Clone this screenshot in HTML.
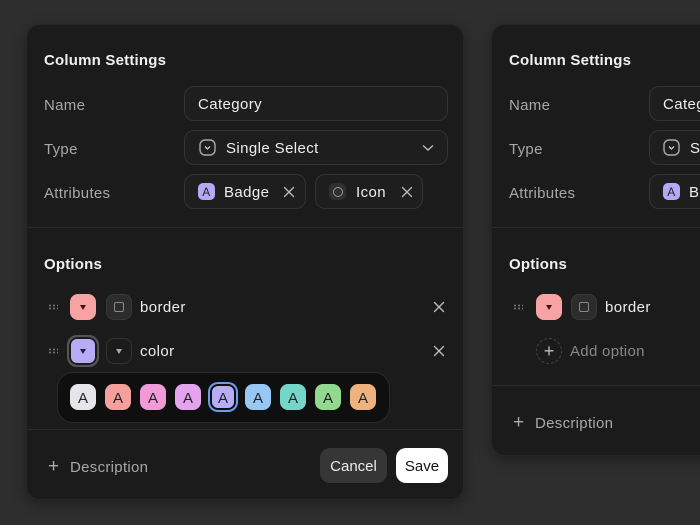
<!DOCTYPE html><html><head><style>
*{box-sizing:border-box;margin:0;padding:0}
body{width:700px;height:525px;background:#2e2e2e;position:relative;overflow:hidden;font-family:"Liberation Sans",sans-serif;color:#ececec}
.card{position:absolute;background:#1b1b1b;border-radius:14px;border:1px solid #262626;box-shadow:0 4px 14px rgba(0,0,0,.35)}
.a{position:absolute;white-space:nowrap}
.t{font-size:15px;font-weight:bold;color:#f0f0f0;letter-spacing:0.2px}
.l{font-size:15px;color:#a8a8a8;letter-spacing:0.3px}
.f{position:absolute;height:35px;border:1px solid #333;border-radius:10px;background:#1e1e1e;font-size:15px;color:#eee;display:flex;align-items:center;padding-left:13px;letter-spacing:0.4px;padding-top:2px}
.hr{position:absolute;height:1px;background:#2a2a2a}
.sw{position:absolute;width:26px;height:26px;border-radius:8px;display:flex;align-items:center;justify-content:center}
.tri{width:0;height:0;border-left:3.5px solid transparent;border-right:3.5px solid transparent;border-top:5px solid #4a1010}
.x{position:absolute;width:12px;height:12px}
.dots{position:absolute;width:10px;height:6px;background-image:radial-gradient(circle,#777 0.8px,transparent 1.1px);background-size:4px 3px}
.c{position:absolute;top:384px;width:26px;height:26px;border-radius:8px;font-size:15px;color:#222;display:flex;align-items:center;justify-content:center;padding-top:2px}
.opt{font-size:15px;letter-spacing:0.4px}
</style></head><body>
<svg width="0" height="0" style="position:absolute"><defs><symbol id="x" viewBox="0 0 12 12"><path d="M1.5 1.5L10.5 10.5M10.5 1.5L1.5 10.5" stroke="#bbb" stroke-width="1.4" fill="none" stroke-linecap="round"/></symbol></defs></svg>
<div class="card" style="left:26px;top:24px;width:438px;height:476px">
<div class="a t" style="left:17px;top:27px">Column Settings</div>
<div class="a l" style="left:17px;top:72px">Name</div>
<div class="a l" style="left:17px;top:116px">Type</div>
<div class="a l" style="left:17px;top:160px">Attributes</div>
<div class="f" style="left:157px;top:61px;width:264px">Category</div>
<div class="f" style="left:157px;top:105px;width:264px;padding-left:14px"><svg width="17" height="17" viewBox="0 0 17 17" style="margin-right:10px;margin-top:-2px"><rect x="1" y="1" width="15" height="15" rx="5" fill="none" stroke="#aaa" stroke-width="1.4"/><path d="M6 7.5L8.5 10L11 7.5" fill="none" stroke="#ccc" stroke-width="1.3"/></svg>Single Select<svg width="12" height="8" viewBox="0 0 12 8" style="position:absolute;right:13px;top:13px"><path d="M1 1.5L6 6L11 1.5" fill="none" stroke="#bbb" stroke-width="1.4"/></svg></div>
<div class="f" style="left:157px;top:149px;width:122px;padding-left:13px"><span style="width:17px;height:17px;background:#b7a8f5;border-radius:5px;display:inline-block;margin-right:9px;margin-top:-2px;font-size:12px;color:#222;text-align:center;line-height:18px">A</span>Badge<svg class="" width="12" height="12" style="margin-left:14px;margin-top:-2px"><use href="#x"/></svg></div>
<div class="f" style="left:288px;top:149px;width:108px;padding-left:13px"><span style="width:17px;height:17px;background:#2f2f2f;border-radius:5px;display:inline-flex;align-items:center;justify-content:center;margin-right:10px;margin-top:-2px"><span style="width:10px;height:10px;border:1.5px solid #999;border-radius:50%"></span></span>Icon<svg width="12" height="12" style="margin-left:15px;margin-top:-2px"><use href="#x"/></svg></div>
<div class="hr" style="left:0;top:202px;width:436px"></div>
<div class="a t" style="left:17px;top:231px">Options</div>
<div class="dots" style="left:21px;top:279px"></div>
<div class="sw" style="left:43px;top:269px;background:#f7a3a3"><div class="tri"></div></div>
<div class="sw" style="left:79px;top:269px;background:#2c2c2c;border:1px solid #383838"><span style="width:10px;height:10px;border:1.5px solid #888;border-radius:2px"></span></div>
<div class="a opt" style="left:113px;top:274px">border</div>
<svg class="x" style="left:406px;top:276px"><use href="#x"/></svg>
<div class="dots" style="left:21px;top:323px"></div>
<div class="sw" style="left:40px;top:310px;width:32px;height:32px;border-radius:10px;border:2px solid #555;background:#b9acf7;box-shadow:inset 0 0 0 2px #1b1b1b"><div class="tri" style="border-top-color:#221a55"></div></div>
<div class="sw" style="left:79px;top:313px;background:#1b1b1b;border:1px solid #333"><div class="tri" style="border-top-color:#aaa"></div></div>
<div class="a opt" style="left:113px;top:318px">color</div>
<svg class="x" style="left:406px;top:320px"><use href="#x"/></svg>
<div class="hr" style="left:0;top:404px;width:436px"></div>
<div class="a" style="left:21px;top:431px;font-size:19px;color:#aaa">+</div>
<div class="a l" style="left:43px;top:434px">Description</div>
<div class="a" style="left:293px;top:423px;width:67px;height:35px;background:#363636;border-radius:10px;font-size:15px;text-align:center;line-height:37px">Cancel</div>
<div class="a" style="left:369px;top:423px;width:52px;height:35px;background:#fff;color:#111;border-radius:10px;font-size:15px;text-align:center;line-height:37px">Save</div>
</div>
<div class="a" style="left:57px;top:372px;width:333px;height:51px;background:#0f0f0f;border:1px solid #2a2a2a;border-radius:16px"></div>
<div class="c" style="left:70px;background:#e6e6ea">A</div>
<div class="c" style="left:105px;background:#f5a09c">A</div>
<div class="c" style="left:140px;background:#f09bd8">A</div>
<div class="c" style="left:175px;background:#e3a3ef">A</div>
<div class="c" style="left:210px;background:#b9acf7;border:2px solid #0f0f0f;box-shadow:0 0 0 2px #6a9df0">A</div>
<div class="c" style="left:245px;background:#96c8f3">A</div>
<div class="c" style="left:280px;background:#74d6c8">A</div>
<div class="c" style="left:315px;background:#92d88e">A</div>
<div class="c" style="left:350px;background:#edb27e">A</div>
<div class="card" style="left:491px;top:24px;width:230px;height:432px">
<div class="a t" style="left:17px;top:27px">Column Settings</div>
<div class="a l" style="left:17px;top:72px">Name</div>
<div class="a l" style="left:17px;top:116px">Type</div>
<div class="a l" style="left:17px;top:160px">Attributes</div>
<div class="f" style="left:157px;top:61px;width:100px">Category</div>
<div class="f" style="left:157px;top:105px;width:100px"><svg width="17" height="17" viewBox="0 0 17 17" style="margin-right:10px;margin-top:-2px"><rect x="1" y="1" width="15" height="15" rx="5" fill="none" stroke="#aaa" stroke-width="1.4"/><path d="M6 7.5L8.5 10L11 7.5" fill="none" stroke="#ccc" stroke-width="1.3"/></svg>Single</div>
<div class="f" style="left:157px;top:149px;width:100px"><span style="width:17px;height:17px;background:#b7a8f5;border-radius:5px;display:inline-block;margin-right:9px;margin-top:-2px;font-size:12px;color:#222;text-align:center;line-height:18px">A</span>Badge</div>
<div class="hr" style="left:0;top:202px;width:230px"></div>
<div class="a t" style="left:17px;top:231px">Options</div>
<div class="dots" style="left:21px;top:279px"></div>
<div class="sw" style="left:44px;top:269px;background:#f7a3a3"><div class="tri"></div></div>
<div class="sw" style="left:79px;top:269px;background:#2c2c2c;border:1px solid #383838"><span style="width:10px;height:10px;border:1.5px solid #888;border-radius:2px"></span></div>
<div class="a opt" style="left:113px;top:274px">border</div>
<div class="sw" style="left:44px;top:313px;border:1px dashed #444;border-radius:50%;color:#bbb;font-size:18px">+</div>
<div class="a l" style="left:78px;top:318px;color:#888">Add option</div>
<div class="hr" style="left:0;top:360px;width:230px"></div>
<div class="a" style="left:21px;top:387px;font-size:19px;color:#aaa">+</div>
<div class="a l" style="left:43px;top:390px">Description</div>
</div>
</body></html>
